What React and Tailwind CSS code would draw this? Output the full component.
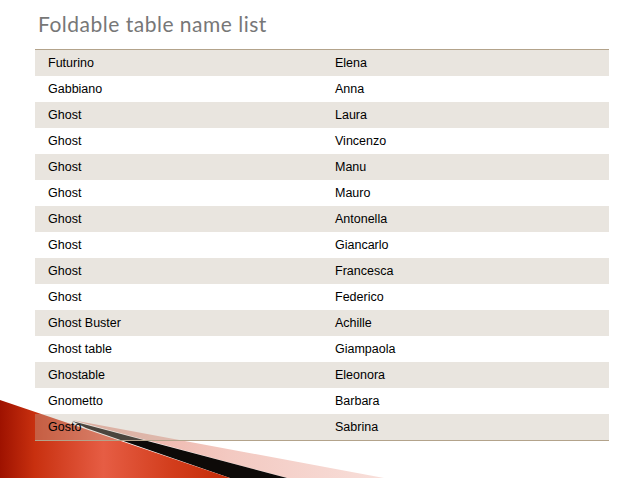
import React from "react";

const rows = [
  ["Futurino", "Elena"],
  ["Gabbiano", "Anna"],
  ["Ghost", "Laura"],
  ["Ghost", "Vincenzo"],
  ["Ghost", "Manu"],
  ["Ghost", "Mauro"],
  ["Ghost", "Antonella"],
  ["Ghost", "Giancarlo"],
  ["Ghost", "Francesca"],
  ["Ghost", "Federico"],
  ["Ghost Buster", "Achille"],
  ["Ghost table", "Giampaola"],
  ["Ghostable", "Eleonora"],
  ["Gnometto", "Barbara"],
  ["Gosto", "Sabrina"],
];

// Red slide decoration in the bottom-left corner
const CornerArt = () => (
  <svg
    className="absolute inset-0 pointer-events-none"
    width="638"
    height="478"
    viewBox="0 0 638 478"
  >
    <defs>
      <linearGradient id="redFill" x1="0" y1="0" x2="1" y2="0">
        <stop offset="0" stopColor="#9e1200" />
        <stop offset="0.15" stopColor="#c8300f" />
        <stop offset="0.45" stopColor="#e65d44" />
        <stop offset="0.75" stopColor="#d23d1c" />
        <stop offset="1" stopColor="#c42a06" />
      </linearGradient>
      <linearGradient id="pinkFill" x1="0" y1="0" x2="1" y2="0">
        <stop offset="0" stopColor="#e9a79b" />
        <stop offset="0.5" stopColor="#f3c9c1" />
        <stop offset="1" stopColor="#f8dfda" />
      </linearGradient>
    </defs>
    <polygon points="72,420 384,478 287,478" fill="url(#pinkFill)" />
    <polygon points="72,421 287,478 230,478 86,428" fill="#0d0a08" />
    <polygon points="0,400 230,478 0,478" fill="url(#redFill)" />
  </svg>
);

export default function App() {
  return (
    <div className="relative w-[638px] h-[478px] overflow-hidden bg-white">
      <CornerArt />
      <div className="relative">
        <h1
          className="h-[49px] pl-[38px] pt-[9px] text-[21px] leading-[29px] tracking-[0.5px] text-[#777777]"
          style={{ fontFamily: "Lato, 'Open Sans', sans-serif" }}
        >
          Foldable table name list
        </h1>
        <div
          className="ml-[35px] w-[574px] border-t border-b border-[#b3a38b] text-[12.5px] text-black"
          style={{ fontFamily: "'Liberation Sans', Arial, sans-serif" }}
        >
          {rows.map(([a, b], i) => (
            <div
              key={i}
              className={`grid grid-cols-[287px_1fr] h-[26px] items-center ${
                i % 2 === 0 ? "bg-[#c0b5a4]/35" : ""
              }`}
            >
              <span className="pl-[13px]">{a}</span>
              <span className="pl-[13px]">{b}</span>
            </div>
          ))}
        </div>
      </div>
    </div>
  );
}
